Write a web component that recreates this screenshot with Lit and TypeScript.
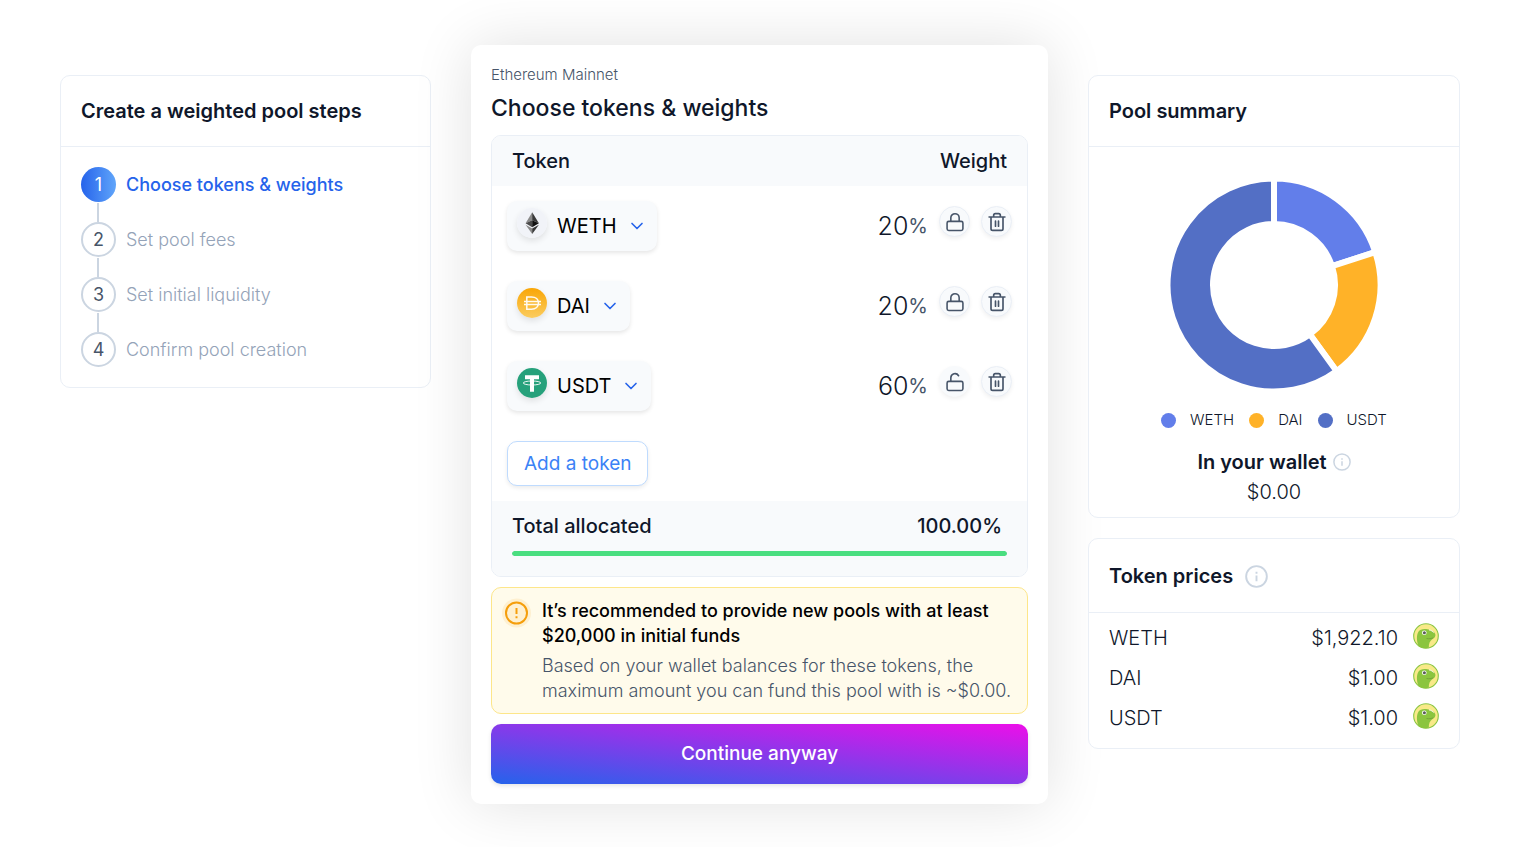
import { LitElement, html, svg, css } from "lit";
import { customElement, state } from "lit/decorators.js";

interface Token {
  symbol: string;
  weight: number;
  locked: boolean;
  price: string;
  color: string;
}

const steps = ["Choose tokens & weights", "Set pool fees", "Set initial liquidity", "Confirm pool creation"];

const chevron = html`<svg width="20" height="20" viewBox="0 0 24 24" fill="none" stroke="currentColor" stroke-width="2" stroke-linecap="round" stroke-linejoin="round" aria-hidden="true"><path d="M6 9l6 6 6-6" /></svg>`;

const lockIcon = (locked: boolean) => html`<svg width="20" height="20" viewBox="0 0 24 24" fill="none" stroke="currentColor" stroke-width="1.900" stroke-linecap="round" stroke-linejoin="round" aria-hidden="true">
  <rect x="2.500" y="11.200" width="19" height="11" rx="2" />
  ${locked ? svg`<path d="M7 11V7a5 5 0 0 1 10 0v4" />` : svg`<path d="M7 11V7a5 5 0 0 1 9.300-2.500" />`}
</svg>`;

const trashIcon = html`<svg width="20" height="20" viewBox="0 0 24 24" fill="none" stroke="currentColor" stroke-width="2" stroke-linecap="round" stroke-linejoin="round" aria-hidden="true">
  <path d="M2.500 6h19M4.800 6v14a2 2 0 0 0 2 2h10.400a2 2 0 0 0 2-2V6M8 6V4a2 2 0 0 1 2-2h4a2 2 0 0 1 2 2v2M10.200 11v6M13.800 11v6" />
</svg>`;

const infoIcon = (size: number) => html`<svg class="info" width=${size} height=${size} viewBox="0 0 24 24" fill="none" stroke="currentColor" stroke-width="2" aria-hidden="true">
  <circle cx="12" cy="12" r="10.8" /><path d="M12 11v6M12 7v2" />
</svg>`;

const tokenIcons: Record<string, unknown> = {
  WETH: html`<svg width="30" height="30" viewBox="0 0 30 30" aria-hidden="true">
    <circle cx="15" cy="15" r="15" fill="#f1f3f8" />
    <path d="M15.2 4.2 8.6 15.3l6.6-3z" fill="#8a8a8a" /><path d="M15.2 4.2v8.1l6.7 3z" fill="#393939" />
    <path d="m8.6 15.3 6.6 3.9v-6.9z" fill="#4a4a4a" /><path d="m21.9 15.3-6.7 3.9v-6.9z" fill="#111" />
    <path d="m8.6 16.7 6.6 9.2v-5.3z" fill="#8a8a8a" /><path d="m21.9 16.7-6.7 9.2v-5.3z" fill="#393939" />
  </svg>`,
  DAI: html`<svg width="30" height="30" viewBox="0 0 30 30" fill="none" aria-hidden="true">
    <defs><linearGradient id="dai" x1="0" y1="0" x2="0" y2="1"><stop stop-color="#f9a606" /><stop offset="1" stop-color="#fbcc5f" /></linearGradient></defs>
    <circle cx="15" cy="15" r="15" fill="url(#dai)" />
    <path d="M9.8 8.900h4.700c4.300 0 7 2.600 7 6.100s-2.700 6.200-7 6.200H9.800zM7 13.500h17M7 16.500h17" stroke="#fffaf0" stroke-width="1.500" />
  </svg>`,
  USDT: html`<svg width="30" height="30" viewBox="0 0 30 30" fill="none" aria-hidden="true">
    <circle cx="15" cy="15" r="15" fill="#26a17b" />
    <path d="M8 7.2h14v4h-5v12.6h-4V11.2H8z" fill="#fff" />
    <ellipse cx="15" cy="15" rx="8.8" ry="2" stroke="#fff" stroke-width=".9" />
  </svg>`,
};

const gecko = html`<svg width="26" height="26" viewBox="0 0 26 26" role="img" aria-label="CoinGecko">
  <circle cx="13" cy="13" r="12.1" fill="#f9e988" />
  <path d="M5.600 23C3.200 17.500 3.600 11.500 5.400 8.700 7 5.900 11 5.500 14.500 6.200c3 .8 6.900 2.200 7.800 4.900.7 2.600-1 4.200-3 5.200-2.400 1.500-3.700 4.600-3.500 8.500-4 .8-7.300.4-10.200-1.800z" fill="#8bc53f" />
  <path d="M16 6.900c2 .3 3.800 1.500 4.800 2.600" stroke="#fff" stroke-width=".9" fill="none" />
  <circle cx="11.300" cy="9.800" r="2.300" fill="#fff" /><circle cx="11.400" cy="9.800" r="1.500" fill="#58595b" />
  <path d="M13.500 15.500c2.500.5 4.800.1 6.800-.7" stroke="#6d9a3a" stroke-width=".8" fill="none" />
  <circle cx="13" cy="13" r="12.300" fill="none" stroke="#8bc53f" stroke-width="1.100" />
</svg>`;

@customElement("app-root")
export class AppRoot extends LitElement {
  @state() private tokens: Token[] = [
    { symbol: "WETH", weight: 20, locked: true, price: "$1,922.10", color: "#627eea" },
    { symbol: "DAI", weight: 20, locked: true, price: "$1.00", color: "#ffb228" },
    { symbol: "USDT", weight: 60, locked: false, price: "$1.00", color: "#536fc5" },
  ];

  static styles = css`
    :host { display: block; min-height: 100vh; background: #fff; color: #0f172a; font: 300 20px/30px Inter, sans-serif; }
    * { box-sizing: border-box; }
    h1, h2, p, ol, ul, dl, dd { margin: 0; padding: 0; }
    ol, ul { list-style: none; }
    svg { display: block; flex: none; }
    button { font: inherit; color: inherit; background: none; border: 0; padding: 0; cursor: pointer; }
    .page { display: grid; grid-template-columns: 371fr 577fr 372fr; gap: 40px; align-items: start; padding: 45px 79px 43px 60px; }
    .side { display: grid; gap: 20px; padding-top: 30px; }
    .card { border: 1px solid #eaeff6; border-radius: 10px; background: #fff; }
    .card-head { display: flex; align-items: center; gap: 12px; padding: 20px; border-bottom: 1px solid #eaeff6; }
    h2 { font-size: 20px; font-weight: 600; line-height: 30px; }
    .card-head.tall { padding: 22px 20px 21px; }

    .steps { padding: 20px; display: grid; gap: 20px; }
    .step { position: relative; }
    .step:not(:last-child)::after { content: ""; position: absolute; left: 16px; top: 36px; height: 19px; width: 2px; background: #cbd5e1; }
    .step button { display: flex; align-items: center; gap: 10px; color: #94a3b8; font-size: 18px; font-weight: 350; }
    .num { display: grid; place-items: center; width: 35px; height: 35px; border: 2px solid #cbd5e1; border-radius: 50%; color: #475569; font-weight: 400; }
    .step .active { color: #2563eb; font-weight: 550; }
    .active .num { border: 0; color: #fff; background: linear-gradient(90deg, #2563eb, #60a5fa); }

    .main { padding: 20px; border-radius: 10px; background: #fff; box-shadow: 0 0 60px rgba(0, 0, 0, 0.12); }
    .network { font-size: 15px; line-height: 20px; font-weight: 350; color: #475569; }
    h1 { margin: 6px 0 9px; font-size: 23px; line-height: 35px; font-weight: 550; }
    .table { border: 1px solid #eaeff6; border-radius: 10px; overflow: hidden; }
    .thead { display: flex; justify-content: space-between; padding: 10px 20px; background: #f8fafc; font-weight: 550; }
    .row { display: flex; justify-content: space-between; padding: 15px; }
    .pill { display: flex; align-items: center; gap: 10px; height: 50px; padding: 0 10px; border-radius: 10px; background: #f8fafc; color: #000; font-weight: 400; box-shadow: 0 2px 4px rgba(0, 0, 0, 0.1); }
    .logo { margin-bottom: 6px; border-radius: 50%; box-shadow: 0 3px 6px rgba(0, 0, 0, 0.1); }
    .pill > svg { color: #2563eb; }
    .controls { display: flex; gap: 11px; align-items: flex-start; }
    .weight { display: flex; align-items: center; height: 50px; color: #475569; }
    .weight input { width: 60px; padding: 0; border: 0; background: none; font: inherit; font-size: 25px; color: #0f172a; text-align: right; }
    .weight span { font-weight: 400; }
    .round { display: grid; place-items: center; width: 31px; height: 31px; margin-top: 5px; border: 1px solid #eaeff6; border-radius: 50%; background: #f8fafc; color: #475569; box-shadow: 0 2px 4px rgba(0, 0, 0, 0.06); }
    .round.open { border-color: #f8fafc; }
    .add-row { padding: 15px; }
    .add { height: 45px; padding: 0 16px; border: 1px solid #bfdbfe; border-radius: 10px; background: #fff; color: #3b82f6; font-size: 19px; font-weight: 400; box-shadow: 0 2px 4px rgba(0, 0, 0, 0.08); }
    .total { padding: 10px 20px 20px; background: #f8fafc; font-weight: 550; }
    .total-line { display: flex; justify-content: space-between; padding-right: 5px; }
    .bar { height: 5px; margin-top: 10px; border-radius: 3px; background: #e2e8f0; overflow: hidden; }
    .fill { height: 100%; border-radius: 3px; background: #4ade80; }
    .alert { display: flex; gap: 11px; margin: 10px 0; padding: 10px; border: 1px solid #fde68a; border-radius: 10px; background: #fffbeb; font-size: 18px; line-height: 25px; color: #475569; }
    .alert strong { display: block; margin-bottom: 5px; font-weight: 550; color: #000; }
    .go { width: 100%; height: 60px; border-radius: 10px; color: #fff; font-size: 19px; font-weight: 500; background: linear-gradient(to top right, #2563eb, #ec0fe9); box-shadow: 0 2px 4px rgba(0, 0, 0, 0.1); }

    .summary { display: grid; justify-items: center; padding: 32px 20px 10px; }
    .legend { display: flex; gap: 15px; margin: 14px 0 12px; font-size: 15px; }
    .legend li { display: flex; align-items: center; gap: 14px; }
    .dot { width: 15px; height: 15px; border-radius: 50%; }
    .wallet { display: flex; align-items: center; gap: 6px; font-weight: 600; }
    .info { color: #cbd5e1; }
    .prices { padding: 5px 20px 10px; }
    .price { display: flex; height: 40px; align-items: center; gap: 15px; }
    .price dt { flex: 1; }
    .price svg { margin-bottom: 4px; }
  `;

  private toggle(token: Token) {
    this.tokens = this.tokens.map((t) => (t === token ? { ...t, locked: !t.locked } : t));
  }

  private donut() {
    const point = (r: number, share: number) => {
      const a = share * 2 * Math.PI;
      return `${(107 + r * Math.sin(a)).toFixed(2)} ${(107 - r * Math.cos(a)).toFixed(2)}`;
    };
    let start = 0;
    return this.tokens.map((t) => {
      const end = start + t.weight / 100;
      const large = t.weight > 50 ? 1 : 0;
      const d = `M${point(106.5, start)}A106.5 106.5 0 ${large} 1 ${point(106.5, end)}L${point(61, end)}A61 61 0 ${large} 0 ${point(61, start)}Z`;
      start = end;
      return svg`<path d=${d} fill=${t.color} stroke="#fff" stroke-width="6" />`;
    });
  }

  render() {
    const total = this.tokens.reduce((sum, t) => sum + t.weight, 0);
    return html`<div class="page">
      <aside class="side">
        <section class="card">
          <header class="card-head"><h2>Create a weighted pool steps</h2></header>
          <ol class="steps">
            ${steps.map((s, i) => html`<li class="step"><button class=${i === 0 ? "active" : ""}><span class="num">${i + 1}</span><span>${s}</span></button></li>`)}
          </ol>
        </section>
      </aside>
      <main class="main">
        <p class="network">Ethereum Mainnet</p>
        <h1>Choose tokens &amp; weights</h1>
        <div class="table">
          <div class="thead"><span>Token</span><span>Weight</span></div>
          ${this.tokens.map((t) => html`<div class="row">
            <button class="pill"><span class="logo">${tokenIcons[t.symbol]}</span>${t.symbol}${chevron}</button>
            <div class="controls">
              <label class="weight"><input type="text" inputmode="decimal" aria-label="${t.symbol} weight" .value=${String(t.weight)} /><span>%</span></label>
              <button class="round ${t.locked ? "" : "open"}" aria-label="Lock ${t.symbol} weight" @click=${() => this.toggle(t)}>${lockIcon(t.locked)}</button>
              <button class="round" aria-label="Remove ${t.symbol}">${trashIcon}</button>
            </div>
          </div>`)}
          <div class="add-row"><button class="add">Add a token</button></div>
          <div class="total">
            <div class="total-line"><span>Total allocated</span><span>${total.toFixed(2)}%</span></div>
            <div class="bar"><div class="fill" style="width:${total}%"></div></div>
          </div>
        </div>
        <div class="alert">
          <svg width="29" height="30" viewBox="0 0 29 30" fill="none" stroke="#f59e0b" stroke-width="2" aria-hidden="true"><circle cx="14.500" cy="15" r="14.500" fill="#fef0d0" stroke="none" /><circle cx="14.500" cy="15" r="10.500" /><path d="M14.500 10v6M14.500 18.300v2" /></svg>
          <div><strong>It’s recommended to provide new pools with at least $20,000 in initial funds</strong><p>Based on your wallet balances for these tokens, the maximum amount you can fund this pool with is ~$0.00.</p></div>
        </div>
        <button class="go">Continue anyway</button>
      </main>
      <aside class="side">
        <section class="card">
          <header class="card-head"><h2>Pool summary</h2></header>
          <div class="summary">
            <svg width="214" height="212" viewBox="0 1 214 212" role="img" aria-label="Pool weights">${this.donut()}</svg>
            <ul class="legend">
              ${this.tokens.map((t) => html`<li><span class="dot" style="background:${t.color}"></span>${t.symbol}</li>`)}
            </ul>
            <div class="wallet">In your wallet ${infoIcon(18)}</div>
            <p>$0.00</p>
          </div>
        </section>
        <section class="card">
          <header class="card-head tall"><h2>Token prices</h2>${infoIcon(23)}</header>
          <dl class="prices">
            ${this.tokens.map((t) => html`<div class="price"><dt>${t.symbol}</dt><dd>${t.price}</dd>${gecko}</div>`)}
          </dl>
        </section>
      </aside>
    </div>`;
  }
}
